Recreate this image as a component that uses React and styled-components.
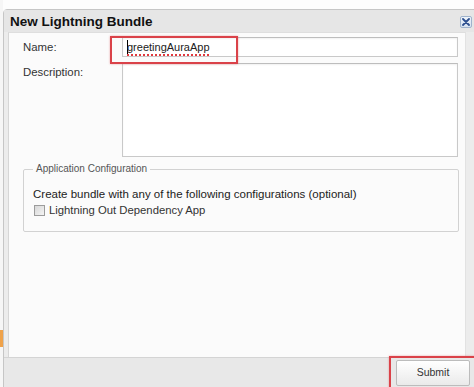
import React from "react";
import styled, { createGlobalStyle } from "styled-components";

const Global = createGlobalStyle`
  html, body { margin: 0; padding: 0; background: #ffffff; overflow: hidden; }
  body { font-family: "Liberation Sans", Arial, sans-serif; color: #333; }
  * { box-sizing: border-box; }
`;

const Page = styled.div`
  display: flex;
  width: 474px;
  height: 387px;
  overflow: hidden;
  background: #fdfdfd;
`;

const Backdrop = styled.div`
  flex: none;
  width: 3px;
  padding-top: 330px;
  background: #f6f6f6;
`;

const OrangeTab = styled.div`
  height: 17px;
  background: #efa24a;
`;

const Dialog = styled.div`
  flex: none;
  margin-top: 9px;
  width: 476px;
  height: 420px;
  border: 1px solid #c6c6c6;
  border-radius: 4px 4px 0 0;
  background: #ececec;
  display: flex;
  flex-direction: column;
`;

const Header = styled.div`
  flex: none;
  height: 22px;
  padding: 0 6px 0 6px;
  display: flex;
  align-items: center;
  justify-content: space-between;
  background: #e6e6e6;
`;

const Title = styled.h1`
  margin: 0;
  font-size: 13.5px;
  font-weight: bold;
  color: #111;
  line-height: 16px;
  padding-top: 2px;
`;

const CloseButton = styled.button`
  width: 12px;
  height: 12px;
  margin-top: 1px;
  padding: 0;
  border: 1px solid #9fb3cc;
  border-radius: 2px;
  background: linear-gradient(#eef4fb, #d6e2f0);
  display: flex;
  align-items: center;
  justify-content: center;
`;

const Body = styled.div`
  flex: none;
  position: relative;
  height: 325px;
  margin: 0 12px 0 4px;
  padding: 4px 6px 0 14px;
  background: #fbfbfb;
  border-left: 1px solid #d6d6d6;
  border-right: 1px solid #e2e2e2;
  border-top: 1px solid #dedede;
`;

const FormGrid = styled.div`
  display: grid;
  grid-template-columns: 99px 1fr;
  row-gap: 6px;
  padding-right: 1px;
`;

const Label = styled.label`
  font-size: 11.4px;
  color: #333;
  line-height: 14px;
  padding-top: ${(p) => p.$top}px;
`;

const TextField = styled.div`
  position: relative;
  height: 20px;
  border: 1px solid #c9c9c9;
  border-top-color: #bdbdbd;
  background: #fff;
  box-shadow: inset 0 1px 2px rgba(0, 0, 0, 0.06);
  padding: 0 0 0 3px;
  display: flex;
  align-items: center;
  font-size: 11px;
  color: #222;
`;

const Value = styled.span`
  text-decoration: underline dotted #e0393e;
  text-decoration-thickness: 1.5px;
  text-underline-offset: 3px;
`;

const Caret = styled.span`
  display: inline-block;
  width: 1px;
  height: 15px;
  margin: 0 -1px 0 1px;
  background: #000;
  vertical-align: middle;
`;

const TextArea = styled.div`
  height: 94px;
  border: 1px solid #c9c9c9;
  border-top-color: #bdbdbd;
  background: #fff;
  box-shadow: inset 0 1px 2px rgba(0, 0, 0, 0.06);
`;

const Fieldset = styled.fieldset`
  margin: 6px 0 0 0;
  padding: 12px 0 14px 9px;
  border: 1px solid #d2d2d2;
  border-radius: 2px;
  min-width: 0;
`;

const Legend = styled.legend`
  padding: 0 3px;
  font-size: 10px;
  line-height: 12px;
  color: #555;
`;

const Hint = styled.div`
  font-size: 11.5px;
  line-height: 14px;
  color: #222;
`;

const CheckRow = styled.label`
  margin-top: 2px;
  display: flex;
  align-items: center;
  gap: 4px;
  font-size: 11.3px;
  line-height: 14px;
  color: #333;
`;

const CheckBox = styled.input`
  appearance: none;
  margin: 0 0 0 1px;
  width: 11px;
  height: 11px;
  border: 1px solid #9c9c9c;
  background: linear-gradient(135deg, #d8d8d8, #f4f4f4);
`;

const Footer = styled.div`
  position: relative;
  flex: 1;
  display: flex;
  justify-content: flex-end;
  align-items: flex-start;
  padding: 2px 8px 0 0;
  background: #e8e8e8;
  border-top: 1px solid #d4d4d4;
`;

const SubmitButton = styled.button`
  width: 74px;
  height: 26px;
  border: 1px solid #bcbcbc;
  border-radius: 2px;
  background: linear-gradient(#ffffff, #eaeaea);
  font-family: "Liberation Sans", Arial, sans-serif;
  font-size: 10.5px;
  color: #333;
  padding: 0 0 2px 0;
`;

const Highlight = styled.div`
  position: absolute;
  left: ${(p) => p.$x}px;
  top: ${(p) => p.$y}px;
  width: ${(p) => p.$w}px;
  height: ${(p) => p.$h}px;
  border: 2px solid #da4249;
  box-shadow: 0 0 2px rgba(218, 66, 73, 0.45);
  pointer-events: none;
`;

export default function App() {
  return (
    <>
      <Global />
      <Page>
        <Backdrop>
          <OrangeTab />
        </Backdrop>
        <Dialog>
          <Header>
            <Title>New Lightning Bundle</Title>
            <CloseButton aria-label="Close">
              <svg width="8" height="8" viewBox="0 0 8 8">
                <path d="M1 1 L7 7 M7 1 L1 7" stroke="#2d4f8f" strokeWidth="1.8" strokeLinecap="round" />
              </svg>
            </CloseButton>
          </Header>
          <Body>
            <FormGrid>
              <Label $top={3}>Name:</Label>
              <TextField>
                <Caret />
                <Value>greetingAuraApp</Value>
              </TextField>
              <Label $top={2}>Description:</Label>
              <TextArea />
            </FormGrid>
            <Fieldset>
              <Legend>Application Configuration</Legend>
              <Hint>Create bundle with any of the following configurations (optional)</Hint>
              <CheckRow>
                <CheckBox type="checkbox" />
                Lightning Out Dependency App
              </CheckRow>
            </Fieldset>
            <Highlight $x={101} $y={3} $w={128} $h={28} />
          </Body>
          <Footer>
            <SubmitButton>Submit</SubmitButton>
            <Highlight $x={385} $y={-2} $w={100} $h={50} />
          </Footer>
        </Dialog>
      </Page>
    </>
  );
}
